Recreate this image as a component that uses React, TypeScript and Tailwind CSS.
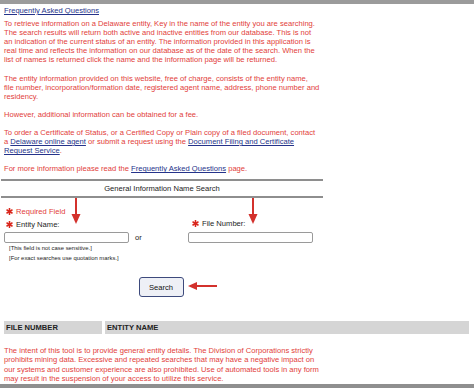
import React from 'react';

const RED = "text-[#e2403a]";

const Star = () => (
  <svg width="7" height="7" viewBox="0 0 10 10" className="shrink-0">
    <g stroke="#d9261c" strokeWidth="2.2" strokeLinecap="round">
      <line x1="5" y1="0.8" x2="5" y2="9.2" />
      <line x1="1.4" y1="2.9" x2="8.6" y2="7.1" />
      <line x1="1.4" y1="7.1" x2="8.6" y2="2.9" />
    </g>
  </svg>
);

const DownArrow = ({ left }: { left: number }) => (
  <svg
    width="10"
    height="27"
    viewBox="0 0 10 27"
    className="absolute top-[198px]"
    style={{ left: left - 5 }}
  >
    <line x1="5" y1="0" x2="5" y2="18" stroke="#d3312c" strokeWidth="2" />
    <polygon points="0.5,16 9.5,16 5,26" fill="#d3312c" />
  </svg>
);

const Link = ({ children }: { children: React.ReactNode }) => (
  <a className="text-[#25338a] underline underline-offset-1 cursor-pointer">{children}</a>
);

export default function App() {
  return (
    <div className="relative w-[474px] h-[389px] bg-white overflow-hidden font-['Liberation_Sans',Arial,sans-serif] text-[7.6px] leading-[9.1px]">
      <div className="h-[4px] bg-[#9b9b9b]" />

      <div className="px-[4px]">
        <p className="mt-[2px]">
          <Link>Frequently Asked Questions</Link>
        </p>

        <p className={`mt-[4px] ${RED}`}>
          To retrieve information on a Delaware entity, Key in the name of the entity you are searching.<br />
          The search results will return both active and inactive entities from our database. This is not<br />
          an indication of the current status of an entity. The information provided in this application is<br />
          real time and reflects the information on our database as of the date of the search. When the<br />
          list of names is returned click the name and the information page will be returned.
        </p>

        <p className={`mt-[9px] ${RED}`}>
          The entity information provided on this website, free of charge, consists of the entity name,<br />
          file number, incorporation/formation date, registered agent name, address, phone number and<br />
          residency.
        </p>

        <p className={`mt-[9px] ${RED}`}>However, additional information can be obtained for a fee.</p>

        <p className={`mt-[9px] ${RED}`}>
          To order a Certificate of Status, or a Certified Copy or Plain copy of a filed document, contact<br />
          a <Link>Delaware online agent</Link> or submit a request using the <Link>Document Filing and Certificate</Link><br />
          <Link>Request Service</Link>.
        </p>

        <p className={`mt-[9px] ${RED}`}>
          For more information please read the <Link>Frequently Asked Questions</Link> page.
        </p>
      </div>

      {/* search form */}
      <div className="w-[322px] ml-[1px] mt-[6px] border-t-2 border-b-2 border-[#8e8e8e] h-[19px] flex items-center justify-center text-[#222]">
        General Information Name Search
      </div>

      <div className="px-[4px] pt-[8px]">
        <div className="h-[10px] flex items-center gap-[3px] pl-[2px]">
          <Star />
          <span className="text-[#e2403a]">Required Field</span>
        </div>
        <div className="mt-[3px] flex">
          <div className="w-[184px]">
            <div className="h-[10px] flex items-center gap-[3px] pl-[2px] text-[#1d1d1d]">
              <Star />
              <span>Entity Name:</span>
            </div>
            <div className="mt-[3px] flex items-center">
              <div className="w-[125px] h-[11px] border border-[#9a9a9a] rounded-[2px] bg-white" />
              <span className="ml-[6px] text-[#1d1d1d]">or</span>
            </div>
          </div>
          <div>
            <div className="h-[10px] -mt-[1px] flex items-center gap-[3px] pl-[4px] text-[#1d1d1d]">
              <Star />
              <span>File Number:</span>
            </div>
            <div className="mt-[4px] w-[125px] h-[11px] border border-[#9a9a9a] rounded-[2px] bg-white" />
          </div>
        </div>
        <div className="pl-[5px] text-[5.9px] leading-[10px] text-[#1d1d1d]">
          <p>[This field is not case sensitive.]</p>
          <p>[For exact searches use quotation marks.]</p>
        </div>
      </div>

      <div className="w-[322px] flex justify-center mt-[14px]">
        <button className="w-[45px] h-[20px] border-[1.5px] border-[#3d4a7c] rounded-[3px] bg-[#eef0f6] text-[#111] text-[7.6px]">
          Search
        </button>
      </div>

      <div className="mt-[24px] px-[4px] flex gap-[3px] h-[13px] font-bold text-[#222]">
        <div className="w-[98px] bg-[#d5d5d5] flex items-center pl-[2px]">FILE NUMBER</div>
        <div className="w-[364px] bg-[#d5d5d5] flex items-center pl-[2px]">ENTITY NAME</div>
      </div>

      <p className={`px-[4px] mt-[12px] ${RED}`}>
        The intent of this tool is to provide general entity details. The Division of Corporations strictly<br />
        prohibits mining data. Excessive and repeated searches that may have a negative impact on<br />
        our systems and customer experience are also prohibited. Use of automated tools in any form<br />
        may result in the suspension of your access to utilize this service.
      </p>

      <div className="absolute left-0 right-0 top-[384px] h-[4px] bg-[#8f8f8f]" />

      {/* annotation arrows */}
      <DownArrow left={76} />
      <DownArrow left={253} />
      <svg width="30" height="8" viewBox="0 0 30 8" className="absolute left-[188px] top-[282px]">
        <line x1="7" y1="4" x2="29" y2="4" stroke="#d3312c" strokeWidth="2" />
        <polygon points="0,4 9,0 9,8" fill="#d3312c" />
      </svg>
    </div>
  );
}
